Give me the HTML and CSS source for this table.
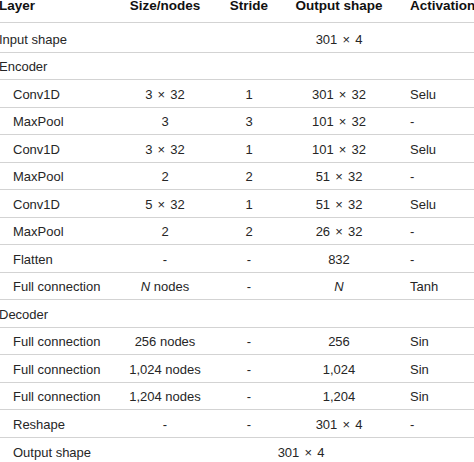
FILE: index.html
```html
<!DOCTYPE html>
<html lang="en">
<head>
<meta charset="utf-8">
<title>Network architecture</title>
<link rel="stylesheet" href="styles.css">
</head>
<body>
<table class="arch">
  <colgroup>
    <col class="c-layer">
    <col class="c-size">
    <col class="c-stride">
    <col class="c-out">
    <col class="c-act">
  </colgroup>
  <thead>
    <tr>
      <th class="left">Layer</th>
      <th>Size/nodes</th>
      <th>Stride</th>
      <th>Output shape</th>
      <th class="act">Activation</th>
    </tr>
  </thead>
  <tbody>
    <tr class="first">
      <td class="left">Input shape</td>
      <td></td>
      <td></td>
      <td>301 <span class="x">×</span> 4</td>
      <td class="act"></td>
    </tr>
    <tr>
      <td class="left">Encoder</td>
      <td></td><td></td><td></td><td class="act"></td>
    </tr>
    <tr>
      <td class="left sub">Conv1D</td>
      <td>3 <span class="x">×</span> 32</td><td>1</td><td>301 <span class="x">×</span> 32</td><td class="act">Selu</td>
    </tr>
    <tr>
      <td class="left sub">MaxPool</td>
      <td>3</td><td>3</td><td>101 <span class="x">×</span> 32</td><td class="act">-</td>
    </tr>
    <tr>
      <td class="left sub">Conv1D</td>
      <td>3 <span class="x">×</span> 32</td><td>1</td><td>101 <span class="x">×</span> 32</td><td class="act">Selu</td>
    </tr>
    <tr>
      <td class="left sub">MaxPool</td>
      <td>2</td><td>2</td><td>51 <span class="x">×</span> 32</td><td class="act">-</td>
    </tr>
    <tr>
      <td class="left sub">Conv1D</td>
      <td>5 <span class="x">×</span> 32</td><td>1</td><td>51 <span class="x">×</span> 32</td><td class="act">Selu</td>
    </tr>
    <tr>
      <td class="left sub">MaxPool</td>
      <td>2</td><td>2</td><td>26 <span class="x">×</span> 32</td><td class="act">-</td>
    </tr>
    <tr>
      <td class="left sub">Flatten</td>
      <td>-</td><td>-</td><td>832</td><td class="act">-</td>
    </tr>
    <tr>
      <td class="left sub">Full connection</td>
      <td><i>N</i> nodes</td><td>-</td><td><i>N</i></td><td class="act">Tanh</td>
    </tr>
    <tr>
      <td class="left">Decoder</td>
      <td></td><td></td><td></td><td class="act"></td>
    </tr>
    <tr>
      <td class="left sub">Full connection</td>
      <td>256 nodes</td><td>-</td><td>256</td><td class="act">Sin</td>
    </tr>
    <tr>
      <td class="left sub">Full connection</td>
      <td>1,024 nodes</td><td>-</td><td>1,024</td><td class="act">Sin</td>
    </tr>
    <tr>
      <td class="left sub">Full connection</td>
      <td>1,204 nodes</td><td>-</td><td>1,204</td><td class="act">Sin</td>
    </tr>
    <tr>
      <td class="left sub">Reshape</td>
      <td>-</td><td>-</td><td>301 <span class="x">×</span> 4</td><td class="act">-</td>
    </tr>
    <tr class="last">
      <td class="left sub">Output shape</td>
      <td colspan="4">301 <span class="x">×</span> 4</td>
    </tr>
  </tbody>
</table>
</body>
</html>
```

FILE: styles.css
```css
html, body {
  margin: 0;
  padding: 0;
  background: #ffffff;
  overflow: hidden;
}

body {
  font-family: "Liberation Sans", Arial, Helvetica, sans-serif;
  color: #262626;
}

.arch {
  table-layout: fixed;
  width: 478px;
  margin: 0 0 0 -1px;
  border-collapse: separate;
  border-spacing: 0;
  font-size: 13px;
  line-height: 15px;
}

.c-layer { width: 126px; }
.c-size { width: 80px; }
.c-stride { width: 88px; }
.c-out { width: 92px; }
.c-act { width: 92px; }

.arch th,
.arch td {
  box-sizing: border-box;
  padding: 0;
  text-align: center;
  white-space: nowrap;
  border-bottom: 1px solid #d3d3d3;
}

.arch th {
  height: 23px;
  vertical-align: top;
  font-size: 13.5px;
  line-height: 11px;
  font-weight: bold;
  color: #111111;
}

.arch td {
  height: 27.5px;
  padding-top: 2px;
  vertical-align: middle;
}

.arch tr.first td {
  height: 29.5px;
  padding-top: 4px;
}

.arch tr.last td {
  border-bottom: none;
}

.arch .left {
  text-align: left;
}

.arch .sub {
  padding-left: 14px;
}

.arch .act {
  text-align: left;
  padding-left: 25px;
}

.x {
  margin: 0 1.5px;
}
```
